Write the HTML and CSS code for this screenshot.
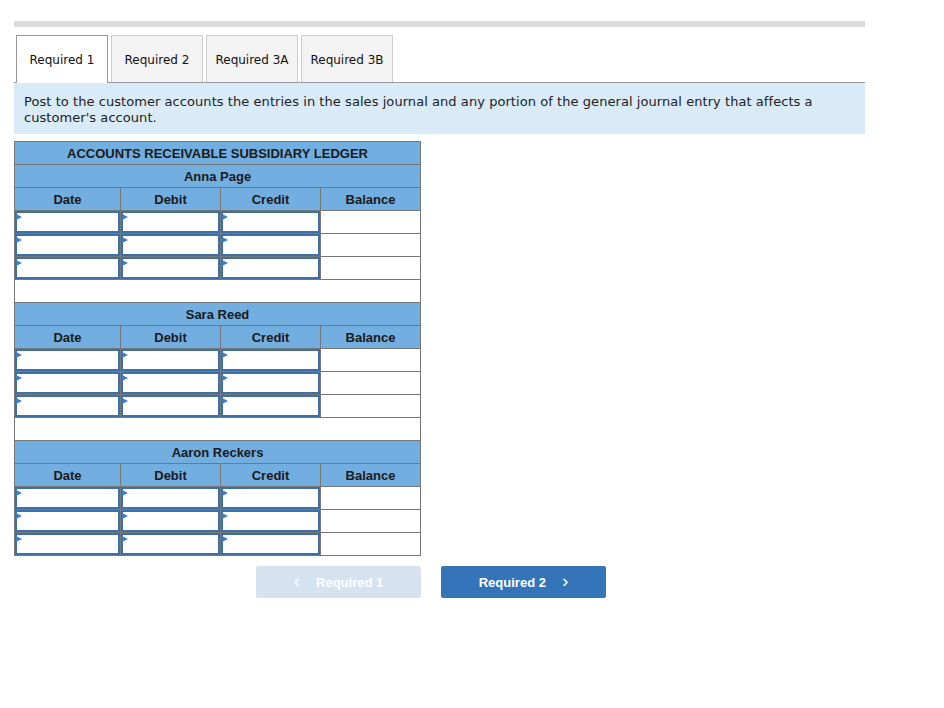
FILE: index.html
```html
<!DOCTYPE html>
<html>
<head>
<meta charset="utf-8" />
<link rel="stylesheet" href="styles.css">
</head>
<body>
<div class="page">
  <div class="topbar"></div>
  <div class="tabs">
    <a href="#" class="tab active">Required 1</a>
    <a href="#" class="tab">Required 2</a>
    <a href="#" class="tab">Required 3A</a>
    <a href="#" class="tab">Required 3B</a>
  </div>
  <div class="note">Post to the customer accounts the entries in the sales journal and any portion of the general journal entry that affects a customer's account.</div>
  <table class="ledger">
    <colgroup><col class="c-date"><col class="c-amt"><col class="c-amt"><col class="c-amt"></colgroup>
    <tr><th colspan="4" class="title">ACCOUNTS RECEIVABLE SUBSIDIARY LEDGER</th></tr>
    <tr><th colspan="4">Anna Page</th></tr>
    <tr><th>Date</th><th>Debit</th><th>Credit</th><th>Balance</th></tr>
    <tr><td class="in"><input></td><td class="in"><input></td><td class="in"><input></td><td></td></tr>
    <tr><td class="in"><input></td><td class="in"><input></td><td class="in"><input></td><td></td></tr>
    <tr><td class="in"><input></td><td class="in"><input></td><td class="in"><input></td><td></td></tr>
    <tr><td colspan="4"></td></tr>
    <tr><th colspan="4">Sara Reed</th></tr>
    <tr><th>Date</th><th>Debit</th><th>Credit</th><th>Balance</th></tr>
    <tr><td class="in"><input></td><td class="in"><input></td><td class="in"><input></td><td></td></tr>
    <tr><td class="in"><input></td><td class="in"><input></td><td class="in"><input></td><td></td></tr>
    <tr><td class="in"><input></td><td class="in"><input></td><td class="in"><input></td><td></td></tr>
    <tr><td colspan="4"></td></tr>
    <tr><th colspan="4">Aaron Reckers</th></tr>
    <tr><th>Date</th><th>Debit</th><th>Credit</th><th>Balance</th></tr>
    <tr><td class="in"><input></td><td class="in"><input></td><td class="in"><input></td><td></td></tr>
    <tr><td class="in"><input></td><td class="in"><input></td><td class="in"><input></td><td></td></tr>
    <tr><td class="in"><input></td><td class="in"><input></td><td class="in"><input></td><td></td></tr>
  </table>
  <div class="nav">
    <a href="#" class="btn btn-prev"><span class="chev">&lsaquo;</span>Required 1</a>
    <a href="#" class="btn btn-next">Required 2<span class="chev">&rsaquo;</span></a>
  </div>
</div>
</body>
</html>
```

FILE: styles.css
```css
:root {--blue-head: #72aee0; --grid: #777; --input-border: #3e70a8; --note-bg: #d9eaf8;}
body {margin: 0; font-family: 'DejaVu Sans', Verdana, sans-serif; color: #222; background: #fff;}
a {text-decoration: none; color: inherit;}
.page {width: 851px; padding: 21px 0 0 14px;}
.topbar {height: 6px; background: #dcdcdc;}
.tabs {display: flex; gap: 3px; padding: 8px 0 0 2px; border-bottom: 1px solid #999;}
.tab {display: block; width: 90px; height: 46px; line-height: 48px; text-align: center; font-size: 12px; color: #111; background: #f3f3f3; border: 1px solid #ccc; border-bottom: none;}
.tab.active {background: #fff; border-color: #999; margin-bottom: -1px; height: 47px;}
.note {background: var(--note-bg); font-size: 13px; line-height: 16px; letter-spacing: 0.06px; padding: 11px 40px 8px 10px; color: #222;}
.ledger {margin-top: 7px; border-collapse: collapse; width: 407px; table-layout: fixed; font-family: 'Liberation Sans', Arial, sans-serif; font-size: 13px;}
.c-date {width: 106px;}
.c-amt {width: 100px;}
.ledger th {background: var(--blue-head); border: 1px solid var(--grid); height: 22px; padding: 0; font-weight: bold; color: #1a1a1a;}
.ledger td {border: 1px solid var(--grid); height: 22px; padding: 0; background: #fff;}
.ledger td.in {position: relative;}
.ledger td.in::before {content: ''; position: absolute; left: 1px; top: 3px; border-left: 6px solid #3a7dc8; border-top: 3px solid transparent; border-bottom: 3px solid transparent;}
.ledger input {display: block; box-sizing: border-box; width: 100%; height: 22px; margin: 0; border: 2px solid var(--input-border); border-radius: 0; background: transparent; outline: none;}
.nav {display: flex; gap: 20px; padding: 10px 0 0 242px;}
.btn {display: flex; align-items: center; justify-content: center; width: 165px; height: 32px; border-radius: 2px; font-family: 'Liberation Sans', Arial, sans-serif; font-weight: bold; font-size: 13px; color: #fff;}
.btn-prev {background: #d5e3f1;}
.btn-next {background: #3375b8;}
.chev {font-size: 19px; font-weight: normal; line-height: 1; margin: -3px 0 0;}
.btn-prev .chev {margin-right: 16px;}
.btn-next .chev {margin-left: 16px;}
```
